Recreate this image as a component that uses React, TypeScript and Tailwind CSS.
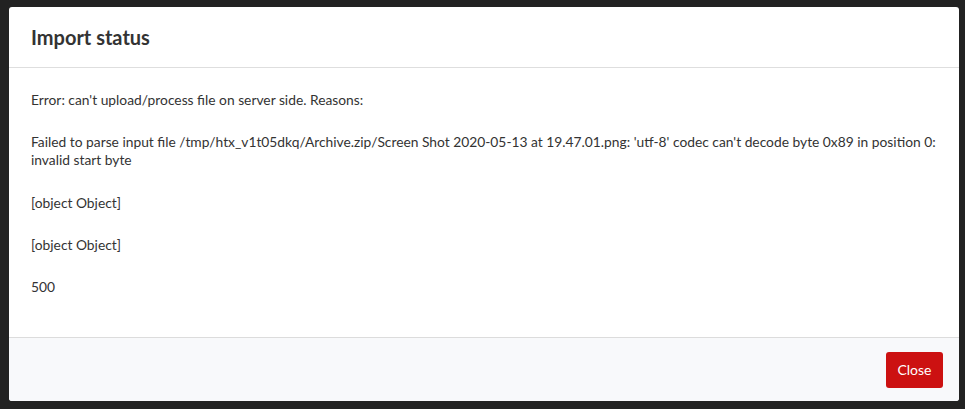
import React from 'react';

const App: React.FC = () => {
  return (
    <div className="h-[409px] w-[965px] bg-[#222222] pt-[7px] pl-[9px] font-['Lato',sans-serif]">
      <div className="flex h-[394px] w-[950px] flex-col overflow-hidden rounded-[3px] bg-white text-[#333333]">
        <div className="flex h-[61px] items-center border-b border-[#dedede] px-[22px]">
          <h2 className="text-[20px] font-bold leading-none">Import status</h2>
        </div>
        <div className="flex-1 pl-[22px] pr-[16px] pt-[23px] text-[13.8px] leading-[18px]">
          <p className="mb-[24px]">Error: can't upload/process file on server side. Reasons:</p>
          <p className="mb-[25px]">
            Failed to parse input file /tmp/htx_v1t05dkq/Archive.zip/Screen Shot 2020-05-13 at 19.47.01.png: 'utf-8' codec can't decode byte 0x89 in position 0: invalid start byte
          </p>
          <p className="mb-[24px]">[object Object]</p>
          <p className="mb-[24px]">[object Object]</p>
          <p>500</p>
        </div>
        <div className="flex h-[64px] items-center justify-end border-t border-[#dcdcdc] bg-[#f8f9fb] px-[16px]">
          <button className="h-[36px] w-[57px] rounded-[3px] bg-[#cc1111] text-[14px] text-white">
            Close
          </button>
        </div>
      </div>
    </div>
  );
};

export default App;
